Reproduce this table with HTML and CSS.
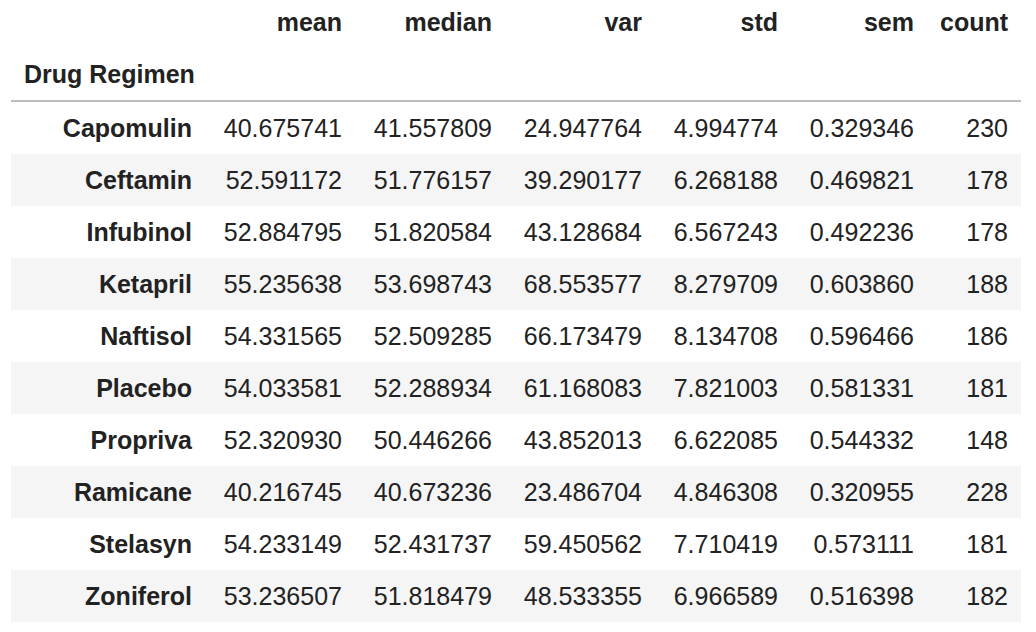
FILE: index.html
```html
<!DOCTYPE html>
<html>
<head>
<meta charset="utf-8">
<link rel="stylesheet" href="styles.css">
</head>
<body>
<table class="df">
  <colgroup>
    <col class="c-idx"><col class="c-wide"><col class="c-wide"><col class="c-wide"><col class="c-mid"><col class="c-mid"><col class="c-count">
  </colgroup>
  <thead>
    <tr class="cols">
      <th></th><th>mean</th><th>median</th><th>var</th><th>std</th><th>sem</th><th>count</th>
    </tr>
    <tr class="names">
      <th>Drug Regimen</th><th></th><th></th><th></th><th></th><th></th><th></th>
    </tr>
  </thead>
  <tbody>
    <tr><th>Capomulin</th><td>40.675741</td><td>41.557809</td><td>24.947764</td><td>4.994774</td><td>0.329346</td><td>230</td></tr>
    <tr><th>Ceftamin</th><td>52.591172</td><td>51.776157</td><td>39.290177</td><td>6.268188</td><td>0.469821</td><td>178</td></tr>
    <tr><th>Infubinol</th><td>52.884795</td><td>51.820584</td><td>43.128684</td><td>6.567243</td><td>0.492236</td><td>178</td></tr>
    <tr><th>Ketapril</th><td>55.235638</td><td>53.698743</td><td>68.553577</td><td>8.279709</td><td>0.603860</td><td>188</td></tr>
    <tr><th>Naftisol</th><td>54.331565</td><td>52.509285</td><td>66.173479</td><td>8.134708</td><td>0.596466</td><td>186</td></tr>
    <tr><th>Placebo</th><td>54.033581</td><td>52.288934</td><td>61.168083</td><td>7.821003</td><td>0.581331</td><td>181</td></tr>
    <tr><th>Propriva</th><td>52.320930</td><td>50.446266</td><td>43.852013</td><td>6.622085</td><td>0.544332</td><td>148</td></tr>
    <tr><th>Ramicane</th><td>40.216745</td><td>40.673236</td><td>23.486704</td><td>4.846308</td><td>0.320955</td><td>228</td></tr>
    <tr><th>Stelasyn</th><td>54.233149</td><td>52.431737</td><td>59.450562</td><td>7.710419</td><td>0.573111</td><td>181</td></tr>
    <tr><th>Zoniferol</th><td>53.236507</td><td>51.818479</td><td>48.533355</td><td>6.966589</td><td>0.516398</td><td>182</td></tr>
  </tbody>
</table>
</body>
</html>
```
FILE: styles.css
```css
html, body {
  margin: 0;
  padding: 0;
  background: #ffffff;
}

.df {
  margin-left: 11px;
  border-collapse: collapse;
  border-spacing: 0;
  table-layout: fixed;
  width: 1010px;
  font-family: "Liberation Sans", Arial, sans-serif;
  font-size: 25px;
  line-height: 26px;
  color: #222222;
}

.c-idx { width: 194px; }
.c-wide { width: 150px; }
.c-mid { width: 136px; }
.c-count { width: 94px; }

.df th,
.df td {
  padding: 13px 13px;
  text-align: right;
  white-space: nowrap;
  vertical-align: middle;
}

.df th {
  font-weight: 700;
}

.df td {
  font-weight: 400;
}

.df .cols th {
  padding-top: 9px;
}

.df thead {
  border-bottom: 2px solid #bdbdbd;
}

.df tbody tr:nth-child(even) {
  background: #f5f5f5;
}
```
